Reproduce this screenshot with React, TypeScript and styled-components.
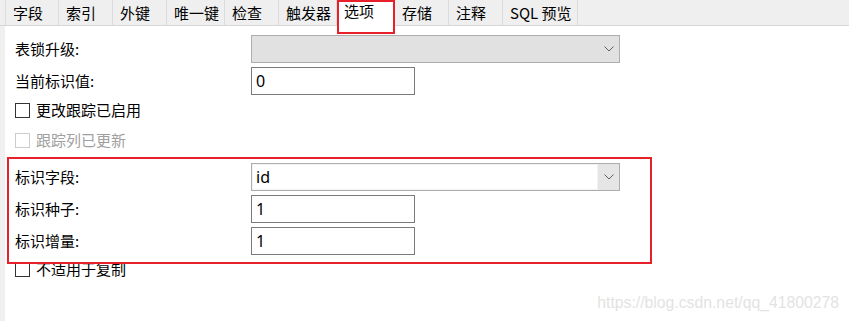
import React from 'react';
import styled, { createGlobalStyle } from 'styled-components';

const GlobalStyle = createGlobalStyle`
  html, body {
    margin: 0;
    padding: 0;
    background: #ffffff;
  }
  body {
    font-family: "Noto Sans", "Noto Sans CJK SC", sans-serif;
    font-size: 15px;
    color: #000;
  }
`;

const Window = styled.div`
  position: relative;
  width: 849px;
  height: 321px;
  overflow: hidden;
  display: flex;
  flex-direction: column;
  background: #ffffff;
`;

const TabBar = styled.div`
  display: flex;
  flex-direction: row;
  height: 26px;
  box-sizing: border-box;
  padding-left: 5px;
  background: #efefef;
  border-bottom: 1px solid #d6d6d6;
`;

const Tab = styled.div<{ $active?: boolean }>`
  position: relative;
  box-sizing: border-box;
  min-width: ${(p) => (p.$active ? '58px' : '54px')};
  height: ${(p) => (p.$active ? '26px' : '25px')};
  padding: ${(p) => (p.$active ? '0 5px 4px 7px' : '1px 5px 0 7px')};
  display: flex;
  align-items: center;
  border-right: 1px solid #dcdcdc;
  background: ${(p) => (p.$active ? '#ffffff' : '#efefef')};
  font-family: "Noto Sans CJK SC", sans-serif;
  font-size: 15px;
  line-height: 18px;
  white-space: nowrap;
  z-index: 1;

  &:first-child {
    border-left: 1px solid #dcdcdc;
  }

  ${(p) =>
    p.$active &&
    `
    &::after {
      content: '';
      position: absolute;
      left: 0;
      top: 0;
      right: -1px;
      bottom: -8px;
      border: 2px solid #e8202a;
      pointer-events: none;
    }
  `}
`;

const Body = styled.div`
  flex: 1;
  display: flex;
  flex-direction: row;
`;

const LeftStrip = styled.div`
  width: 5px;
  background: #f0f0f0;
`;

const Content = styled.div`
  flex: 1;
  padding: 9px 0 0 10px;
  display: flex;
  flex-direction: column;
`;

const FieldGrid = styled.div`
  display: grid;
  grid-template-columns: 236px auto;
  grid-auto-rows: 28px;
  row-gap: 4px;
  align-items: center;
`;

const Label = styled.span`
  font-family: "Noto Sans CJK SC", sans-serif;
  font-size: 15px;
  line-height: 20px;
  white-space: nowrap;
`;

const ComboBox = styled.div<{ $disabled?: boolean }>`
  box-sizing: border-box;
  width: 369px;
  height: 28px;
  display: flex;
  flex-direction: row;
  border: 1px solid #adadad;
  background: ${(p) => (p.$disabled ? '#e1e1e1' : '#ffffff')};
`;

const ComboText = styled.div<{ $disabled?: boolean }>`
  flex: 1;
  display: flex;
  align-items: center;
  padding-left: 3px;
  font-size: 16px;
  border: 1px solid ${(p) => (p.$disabled ? 'transparent' : '#f3f3f3')};
`;

const ComboButton = styled.div<{ $disabled?: boolean }>`
  width: 21px;
  display: flex;
  align-items: center;
  justify-content: center;
  background: ${(p) => (p.$disabled ? 'transparent' : '#e5e5e5')};
`;

const TextInput = styled.div`
  box-sizing: border-box;
  width: 164px;
  height: 28px;
  display: flex;
  align-items: center;
  padding-left: 4px;
  border: 1px solid #7a7a7a;
  background: #ffffff;
  font-size: 16px;
`;

const CheckRow = styled.div<{ $disabled?: boolean }>`
  height: 30px;
  display: flex;
  flex-direction: row;
  align-items: center;
  gap: 6px;
  color: ${(p) => (p.$disabled ? '#a0a0a0' : '#000000')};
`;

const CheckBox = styled.span<{ $disabled?: boolean }>`
  box-sizing: border-box;
  width: 15px;
  height: 15px;
  border: 1px solid ${(p) => (p.$disabled ? '#cccccc' : '#333333')};
  background: #ffffff;
`;

const IdentityGroup = styled.div`
  position: relative;
  z-index: 2;
  box-sizing: border-box;
  width: 645px;
  margin: 2px 0 0 -8px;
  padding: 4px 0 7px 6px;
  border: 2px solid #e8202a;
`;

const TrailingRow = styled(CheckRow)`
  margin-top: -10px;
`;

const Watermark = styled.div`
  position: absolute;
  right: 10px;
  bottom: 9px;
  font-family: "Liberation Sans", Arial, sans-serif;
  font-size: 15.75px;
  color: #e3e3e3;
`;

const Chevron: React.FC = () => (
  <svg width="10" height="6" viewBox="0 0 10 6">
    <polyline points="0.5,0.5 5,5 9.5,0.5" fill="none" stroke="#606060" strokeWidth="1" />
  </svg>
);

const tabs = ['字段', '索引', '外键', '唯一键', '检查', '触发器', '选项', '存储', '注释', 'SQL 预览'];

export default function App() {
  return (
    <>
      <GlobalStyle />
      <Window>
        <TabBar>
          {tabs.map((t) => (
            <Tab key={t} $active={t === '选项'}>
              {t}
            </Tab>
          ))}
        </TabBar>
        <Body>
          <LeftStrip />
          <Content>
            <FieldGrid>
              <Label>表锁升级:</Label>
              <ComboBox $disabled>
                <ComboText $disabled />
                <ComboButton $disabled>
                  <Chevron />
                </ComboButton>
              </ComboBox>
              <Label>当前标识值:</Label>
              <TextInput>0</TextInput>
            </FieldGrid>

            <CheckRow>
              <CheckBox />
              <Label>更改跟踪已启用</Label>
            </CheckRow>
            <CheckRow $disabled>
              <CheckBox $disabled />
              <Label>跟踪列已更新</Label>
            </CheckRow>

            <IdentityGroup>
              <FieldGrid>
                <Label>标识字段:</Label>
                <ComboBox>
                  <ComboText>id</ComboText>
                  <ComboButton>
                    <Chevron />
                  </ComboButton>
                </ComboBox>
                <Label>标识种子:</Label>
                <TextInput>1</TextInput>
                <Label>标识增量:</Label>
                <TextInput>1</TextInput>
              </FieldGrid>
            </IdentityGroup>

            <TrailingRow>
              <CheckBox />
              <Label>不适用于复制</Label>
            </TrailingRow>
          </Content>
        </Body>
        <Watermark>https://blog.csdn.net/qq_41800278</Watermark>
      </Window>
    </>
  );
}
